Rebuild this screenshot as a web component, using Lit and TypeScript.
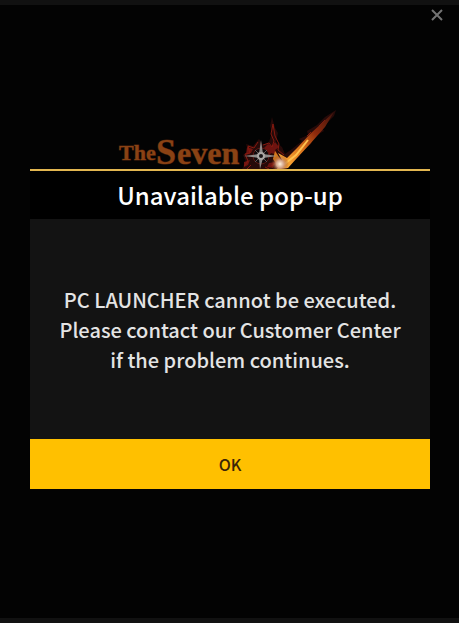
import { LitElement, html, css } from "lit";
import { customElement } from "lit/decorators.js";

@customElement("game-logo")
class GameLogo extends LitElement {
  static styles = css`
    :host {
      display: block;
      width: 224px;
      height: 64px;
    }
    .art {
      display: block;
      overflow: visible;
    }
    .title {
      font-family: "Liberation Serif", serif;
      font-weight: bold;
      fill: #8a4214;
      stroke: #4a200b;
      stroke-width: 1;
      paint-order: stroke;
    }
    .small {
      font-size: 22px;
    }
    .initial {
      font-size: 36px;
    }
    .large {
      font-size: 32px;
    }
  `;

  render() {
    return html`
      <svg class="art" width="224" height="64" viewBox="0 0 224 64" role="img" aria-label="The Seven">
        <defs>
          <linearGradient id="trail" x1="164" y1="60" x2="218" y2="6" gradientUnits="userSpaceOnUse">
            <stop offset="0" stop-color="#ffb03a" />
            <stop offset="0.35" stop-color="#d8701a" />
            <stop offset="0.6" stop-color="#8e2a0c" />
            <stop offset="1" stop-color="#3a120c" />
          </linearGradient>
          <radialGradient id="glow">
            <stop offset="0" stop-color="#fff1d8" />
            <stop offset="0.4" stop-color="#d5a68c" />
            <stop offset="1" stop-color="#8a3410" stop-opacity="0" />
          </radialGradient>
        </defs>
        <text class="title"><tspan class="small" x="1" y="55">The</tspan><tspan class="initial" x="38" y="59">S</tspan><tspan class="large" x="59" y="59">even</tspan></text>
        <path fill="#260a09" d="M124 64 L128 57 L125 50 L130 46 L128 39 L135 41 L141 34 L145 40 L151 37 L154 27 L152 21 L154 12 L157 23 L160 28 L158 37 L164 42 L167 49 L174 44 L184 36 L181 34 L190 30 L189 26 L199 20 L207 12 L218 5 L216 11 L204 23 L206 26 L196 32 L193 39 L184 45 L181 52 L172 58 L169 64 Z" />
        <path fill="#6e1410" d="M129 42 L135 44 L133 48 L128 50 Z M146 43 L150 39 L154 41 L157 37 L161 42 L157 45 L160 50 L153 48 L150 52 L148 47 Z M126 57 L132 55 L130 60 L126 62 Z M151 58 L157 57 L155 63 L149 62 Z" />
        <path fill="none" stroke="#86190f" stroke-width="1" d="M126 61 L130 56 L127 49 L132 48 L130 41 L136 43 L140 37 M145 40 L151 38 L154 42 L156 36 L153 29 L155 19 L157 31 L161 39 L160 45 L166 50 M129 64 L133 60 M153 61 L160 57 M147 62 L151 64 M193 27 L189 31 M201 21 L207 15" />
        <path fill="url(#trail)" d="M159 64 L164 55 L160 48 L169 53 L180 42 L192 29 L204 18 L216 7 L207 22 L192 39 L179 53 L170 63 Z" />
        <path fill="#d27a1b" d="M157 46 L163 55 L159 60 L155 54 Z" />
        <path fill="none" stroke="#ffc24f" stroke-width="2" d="M164 61 L178 50 L190 35" />
        <circle cx="162" cy="59" r="9" fill="url(#glow)" />
        <circle cx="143" cy="51" r="8" fill="#10090b" stroke="#5a1712" stroke-width="1" />
        <path fill="none" stroke="#5e5554" stroke-width="1" d="M137 45 L149 57 M149 45 L137 57" />
        <path fill="#8f8b89" d="M143 35 L145 49 L159 51 L145 53 L142 64 L141 53 L126 51 L141 49 Z" />
        <circle cx="143" cy="51" r="3" fill="#171315" stroke="#aaa7a5" stroke-width="2" />
      </svg>
    `;
  }
}

@customElement("app-root")
class AppRoot extends LitElement {
  static styles = css`
    :host {
      display: block;
      font-family: "Noto Sans CJK KR", "Noto Sans", sans-serif;
      font-weight: 500;
    }
    .window {
      box-sizing: border-box;
      min-height: 100vh;
      display: flex;
      flex-direction: column;
      background: #030303;
      border-top: 5px solid #111111;
      border-bottom: 5px solid #111111;
    }
    .bar {
      display: flex;
      justify-content: flex-end;
      padding: 2px 14px 0;
    }
    .close {
      display: flex;
      align-items: center;
      justify-content: center;
      width: 16px;
      height: 16px;
      padding: 0;
      border: 0;
      background: none;
      color: #737373;
    }
    .brand {
      display: flex;
      justify-content: center;
      padding-top: 82px;
    }
    .dialog {
      position: relative;
      margin: 0 29px 0 30px;
      border-top: 2px solid #e2b650;
      background: #131313;
    }
    .heading {
      margin: 0;
      padding: 6px 0;
      background: #000000;
      color: #ffffff;
      font-size: 24px;
      line-height: 36px;
      font-weight: inherit;
      text-align: center;
    }
    .message {
      margin: 0;
      padding: 66px 0 64px;
      color: #e4e4e4;
      font-size: 20px;
      line-height: 30px;
      text-align: center;
    }
    .ok {
      display: block;
      width: 100%;
      height: 50px;
      padding: 0;
      border: 0;
      background: #ffc000;
      color: #3a2408;
      font-family: inherit;
      font-size: 16px;
      font-weight: inherit;
      line-height: 24px;
    }
  `;

  render() {
    return html`
      <main class="window">
        <div class="bar">
          <button class="close" type="button" aria-label="Close">
            <svg width="12" height="12" viewBox="0 0 12 12" aria-hidden="true">
              <path d="M1 1 L11 11 M11 1 L1 11" fill="none" stroke="currentColor" stroke-width="2" />
            </svg>
          </button>
        </div>
        <div class="brand"><game-logo></game-logo></div>
        <section class="dialog" role="alertdialog" aria-labelledby="heading" aria-describedby="message">
          <h1 class="heading" id="heading">Unavailable pop-up</h1>
          <p class="message" id="message">
            PC LAUNCHER cannot be executed.<br />Please contact our Customer Center<br />if the problem continues.
          </p>
          <button class="ok" type="button">OK</button>
        </section>
      </main>
    `;
  }
}
